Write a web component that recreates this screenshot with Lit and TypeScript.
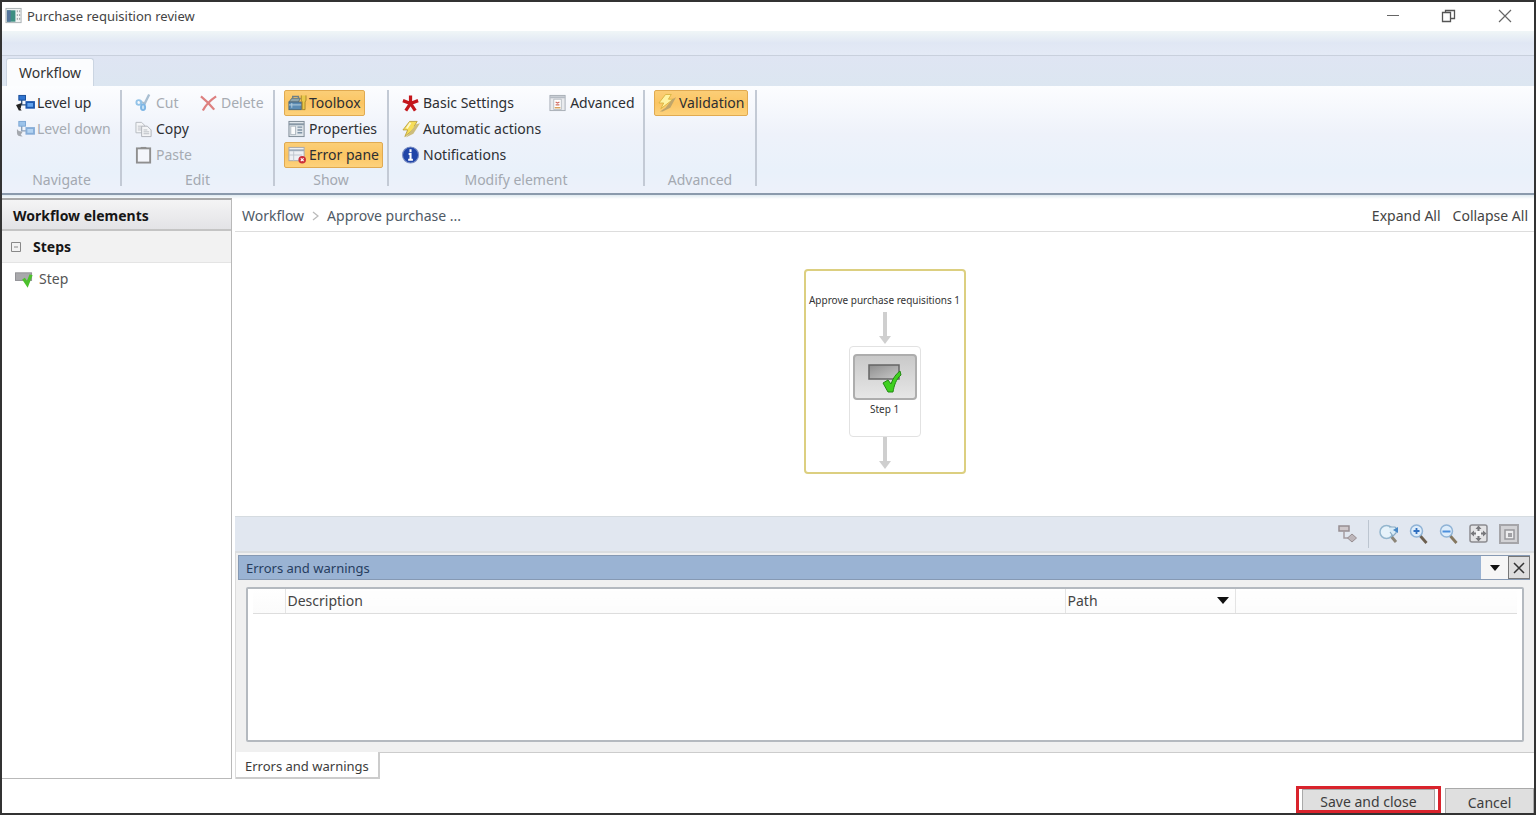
import { LitElement, html, css, svg, TemplateResult } from "lit";
import { customElement, state } from "lit/decorators.js";
import { classMap } from "lit/directives/class-map.js";

const shape = {
  app: svg`<rect x="1" y="1" width="16" height="15" fill="#f1f3f3" stroke="#a9b0b3"/><rect x="2" y="3" width="9" height="12" fill="#3e8f82"/><rect x="2" y="3" width="4" height="12" fill="#55759c"/><path d="M13 3v12M15.500 3v12" stroke="#8f9698" stroke-dasharray="2 2"/>`,
  levelUp: svg`<path d="M6 5v6h6" fill="none" stroke="#37577f" stroke-width="1.500"/><rect x="3" y="1" width="7" height="5" fill="#2f74d0" stroke="#174b97"/><rect x="11" y="8" width="8" height="6" fill="#62a3ee" stroke="#1c57ad" stroke-width="2"/><path d="M0 11l6-2-1 6-1.500-1.500L6 17H3l-2-4z" fill="#222"/>`,
  levelDown: svg`<path d="M6 5v6h6" fill="none" stroke="#8ba0b8" stroke-width="1.500"/><rect x="3" y="1" width="7" height="5" fill="#9cc3ea" stroke="#7ba5d3"/><rect x="11" y="8" width="8" height="6" fill="#b3d3f2" stroke="#86add8" stroke-width="2"/><path d="M1 9v4c0 3 2 4 6 4l-2-2 2-3-4-1z" fill="#a4a8ae"/>`,
  cut: svg`<path d="M15 0L9 12" stroke="#a9bfd2" stroke-width="2.500"/><path d="M5 7l6 3" stroke="#a9bfd2" stroke-width="2"/><circle cx="4" cy="8.500" r="2.500" fill="none" stroke="#93c3e8" stroke-width="2"/><ellipse cx="8.500" cy="13.500" rx="2.200" ry="3" fill="#c4e0f5" stroke="#7db5e4" stroke-width="2"/>`,
  remove: svg`<path d="M1 2c5 4 10 9 14 14M17 2C11 6 6 11 3 17" fill="none" stroke="#dd8080" stroke-width="2.400"/>`,
  copy: svg`<path d="M1 2h6l3 3v8H1z" fill="#f4f5f7" stroke="#b6bac0"/><path d="M3 6h4M3 8h5M3 10h5" stroke="#bcc0c6"/><path d="M7 6h6l4 4v7H7z" fill="#f4f5f7" stroke="#aeb2b8"/><path d="M9 10h4M9 12h6M9 14h6" stroke="#b8bcc2"/>`,
  paste: svg`<rect x="2" y="2" width="14" height="15" fill="#f4f6fb" stroke="#8f8f8f" stroke-width="2"/><path d="M6 1.500h6" stroke="#8f8f8f" stroke-width="2"/>`,
  toolbox: svg`<path d="M1 8l3-4h9l-2 4z" fill="#8fa5ad" stroke="#60747c"/><path d="M5 4V2h6v2" fill="none" stroke="#6f7f86" stroke-width="1.500"/><rect x="1" y="8" width="13" height="8" fill="#5c8cb4" stroke="#47667e"/><path d="M1 11h13M4 9v5" stroke="#b7cfdf"/><path d="M14 1v5l1 2v8h3V8l1-2V1" fill="#e9c94a" stroke="#98771f" stroke-width=".8"/>`,
  properties: svg`<rect x="1" y="1" width="16" height="16" fill="#dfe5ea" stroke="#7c8994"/><path d="M1 4h16" stroke="#8898a6" stroke-width="2"/><rect x="3" y="6" width="5" height="9" fill="#fafbfc" stroke="#a2adb6" stroke-width=".8"/><path d="M10 7h5M10 10h5M10 13h5" stroke="#7f93a5" stroke-width="1.500"/>`,
  errorPane: svg`<rect x="1" y="1" width="16" height="14" fill="#edf0f4" stroke="#a8a9ad"/><path d="M1 4h16" stroke="#9eabb9" stroke-width="2"/><path d="M6 5v10M1 9h14" stroke="#bec5ce"/><circle cx="15" cy="14" r="4" fill="#cc3038"/><path d="M13.500 12.500l3 3M16.500 12.500l-3 3" stroke="#fff" stroke-width="1.300"/>`,
  star: svg`<path d="M9 9.500V1M9 9.500l8-3M9 9.500l5 7.500M9 9.500l-5 7.500M9 9.500L1 6.500" stroke="#c4161c" stroke-width="3.400"/>`,
  bolt: svg`<path d="M8 1h8l-3 5h3L3 17l3-7H1z" fill="#f7de58" stroke="#b69c3b" stroke-width=".9"/><path d="M15 4l4-1-7 11-8 4z" fill="#cdbd7c"/><path d="M9 2.500L5 8.500" stroke="#fff8c8" stroke-width="2"/>`,
  boltPale: svg`<path d="M8 0h6l-3 5h5L3 15l3-6H1z" fill="#fff3a2" stroke="#d6b13c" stroke-width=".9"/><path d="M15 5l4-2-6 11-8 4H2l6-4z" fill="#c0a66a"/>`,
  info: svg`<circle cx="9" cy="9" r="8.500" fill="#2146a8" stroke="#7d90c4" stroke-width="1.200"/><path d="M9 3v3M7 8h2v6M6.500 14h5" stroke="#fff" stroke-width="2.200" fill="none"/>`,
  advanced: svg`<rect x="1" y="1" width="16" height="16" fill="#e9ebee" stroke="#a6adb5"/><path d="M1 3h16" stroke="#b5bcc4" stroke-width="2"/><path d="M5 5h8v11H5z" fill="#fff" stroke="#b6bcc3"/><path d="M7 8l2 1 2-1M7 11h4" stroke="#d06c62" stroke-width="1.300" fill="none"/><path d="M6 14h6" stroke="#daa25b" stroke-width="1.500"/>`,
  step: svg`<rect x="0.500" y="2.500" width="17" height="8" fill="#a9a9ac" stroke="#8f8f93"/><path d="M9 8.500l4 6 4-10" fill="none" stroke="#4cc12c" stroke-width="3.400"/>`,
  tree: svg`<rect x="1" y="2" width="10" height="5" fill="#cfc8cb" stroke="#978e92" stroke-width="1.500"/><path d="M6 7v7h5" fill="none" stroke="#a59da1" stroke-width="1.500"/><path d="M14 10l4.500 4-4.500 4-4.500-4z" fill="#bdb6ba" stroke="#978e92"/>`,
  zoomReset: svg`<path d="M11 11l6 7" stroke="#8c8577" stroke-width="3"/><circle cx="7.500" cy="8" r="6.500" fill="#e6f2fa" stroke="#94b6ce" stroke-width="1.500"/><path d="M10 3h6l2 2-1 4-3 3-3-4" fill="#d9ebf6" stroke="#8aabc4" stroke-width="1.200"/><path d="M14 6l5-3v6z" fill="#4888c6"/>`,
  zoomIn: svg`<path d="M10.500 11l7 8" stroke="#6c5f4f" stroke-width="2.800"/><circle cx="7.500" cy="7" r="6" fill="#ddecfa" stroke="#8fb3d6" stroke-width="1.500"/><path d="M7.500 4v6M4.500 7h6" stroke="#2f6fc0" stroke-width="1.800"/>`,
  zoomOut: svg`<path d="M10.500 11l7 8" stroke="#85775f" stroke-width="2.800"/><circle cx="7.500" cy="7" r="6" fill="#ddecfa" stroke="#8fb3d6" stroke-width="1.500"/><path d="M3.500 7.500h8" stroke="#4b8fdd" stroke-width="2"/>`,
  fit: svg`<rect x="1" y="1" width="17" height="17" rx="2" fill="#e3e3e5" stroke="#8c8c90" stroke-width="1.500"/><path d="M9.500 3v13M3 9.500h13" stroke="#77777b" stroke-width="2"/><path d="M9.500 1.500L6.500 5h6zM9.500 17.500l-3-3.500h6zM1.500 9.500L5 6.500v6zM17.500 9.500L14 6.500v6z" fill="#77777b"/><rect x="7" y="7" width="5" height="5" fill="#f3f3f4"/>`,
  actual: svg`<rect x="1" y="1" width="18" height="18" fill="#d2d2d5" stroke="#a5a5a9" stroke-width="2"/><rect x="6" y="6" width="9" height="9" fill="#ececee" stroke="#98989c" stroke-width="1.500"/><rect x="9" y="9" width="4" height="4" fill="#a1a1a5"/>`,
};

type IconName = keyof typeof shape;
interface Command { label: string; icon: IconName; on?: boolean; disabled?: boolean }
interface Group { name: string; key: string; columns: Command[][] }

const icon = (name: IconName, size = 18): TemplateResult =>
  html`<svg class="icon" width=${size} height=${size} viewBox=${size === 20 ? "0 0 20 20" : "0 0 19 18"} aria-hidden="true">${shape[name]}</svg>`;

const groups: Group[] = [
  { name: "Navigate", key: "navigate", columns: [[{ label: "Level up", icon: "levelUp" }, { label: "Level down", icon: "levelDown", disabled: true }]] },
  { name: "Edit", key: "edit", columns: [
    [{ label: "Cut", icon: "cut", disabled: true }, { label: "Copy", icon: "copy" }, { label: "Paste", icon: "paste", disabled: true }],
    [{ label: "Delete", icon: "remove", disabled: true }],
  ] },
  { name: "Show", key: "show", columns: [[{ label: "Toolbox", icon: "toolbox", on: true }, { label: "Properties", icon: "properties" }, { label: "Error pane", icon: "errorPane", on: true }]] },
  { name: "Modify element", key: "modify", columns: [
    [{ label: "Basic Settings", icon: "star" }, { label: "Automatic actions", icon: "bolt" }, { label: "Notifications", icon: "info" }],
    [{ label: "Advanced", icon: "advanced" }],
  ] },
  { name: "Advanced", key: "advanced", columns: [[{ label: "Validation", icon: "boltPale", on: true }]] },
];

const base = css`
  * { box-sizing: border-box; }
  button { font: inherit; color: inherit; background: none; border: 0; padding: 0; margin: 0; }
  .icon { flex: none; display: block; overflow: visible; }
`;

@customElement("ribbon-bar")
class RibbonBar extends LitElement {
  static styles = [base, css`
    :host { display: block; }
    .tabs { display: flex; align-items: flex-end; height: 31px; padding-left: 4px; border-top: 1px solid #c9d0dd; background: linear-gradient(#dfe5f3, #dce6f1); }
    .tab { height: 28px; padding: 0 12px; color: #333; background: #fbfcfe; border: 1px solid #cbd5e2; border-bottom: 0; border-radius: 3px 3px 0 0; }
    .groups { display: flex; height: 109px; padding: 4px 0 0 1px; background: linear-gradient(#fcfdff, #eef2fa 45%, #e9f1fa 80%, #edf1fa); border-bottom: 2px solid #8b9aac; }
    .group { display: flex; flex-direction: column; padding-left: 9px; border-right: 2px solid #c3cad5; margin-bottom: 7px; }
    .navigate { width: 119px; }
    .edit { width: 153px; }
    .show { width: 114px; }
    .modify { width: 256px; }
    .advanced { width: 112px; }
    .columns { display: flex; flex: none; height: 78px; }
    .column { display: flex; flex-direction: column; align-items: flex-start; }
    .command { display: flex; align-items: center; gap: 3px; height: 26px; padding: 0 3px; border: 1px solid transparent; border-radius: 2px; color: #2d2f33; white-space: nowrap; }
    .command:disabled { color: #a6abb2; }
    .on { background: linear-gradient(#fbce77, #fbc563 50%, #fdd27c); border-color: #e0aa51; }
    .caption { height: 12px; margin-top: 6px; line-height: 12px; padding-right: 9px; text-align: center; color: #a4a9b1; }
  `];

  render() {
    return html`
      <div class="tabs"><button class="tab">Workflow</button></div>
      <div class="groups">
        ${groups.map((g) => html`
          <div class="group ${g.key}">
            <div class="columns">
              ${g.columns.map((col) => html`<div class="column">
                ${col.map((c) => html`<button class=${classMap({ command: true, on: !!c.on })} ?disabled=${c.disabled}>${icon(c.icon)}<span>${c.label}</span></button>`)}
              </div>`)}
            </div>
            <div class="caption">${g.name}</div>
          </div>`)}
      </div>`;
  }
}

@customElement("workflow-canvas")
class WorkflowCanvas extends LitElement {
  static styles = [base, css`
    :host { display: flex; justify-content: center; padding-top: 37px; background: #fff; overflow: hidden; }
    .frame { display: flex; flex-direction: column; align-items: center; align-self: flex-start; width: 162px; height: 205px; padding-top: 19px; border: 2px solid #dccf80; border-radius: 4px; font-size: 10px; line-height: 20px; color: #333; white-space: nowrap; }
    .arrow { flex: none; display: block; }
    .node { width: 72px; height: 91px; margin: 2px 0 0; padding: 7px 3px; border: 1px solid #e2e2e2; border-radius: 4px; line-height: 18px; text-align: center; }
    .first { margin-top: 2px; }
    .face { display: grid; place-items: center; height: 46px; border: 2px solid #adadad; border-radius: 4px; background: linear-gradient(#c9c9c9, #e6e6e6); }
  `];

  private arrow(place = "") {
    return html`<svg class="arrow ${place}" width="14" height="32" viewBox="0 0 14 32" aria-hidden="true"><path d="M5 0h4v24h4l-6 8-6-8h4z" fill="#cfcfcf"/></svg>`;
  }

  render() {
    return html`<div class="frame">
      <div>Approve purchase requisitions 1</div>
      ${this.arrow("first")}
      <div class="node">
        <div class="face">
          <svg width="36" height="32" viewBox="0 0 36 32" aria-hidden="true">
            <defs><linearGradient id="g" x2="1" y2="1"><stop stop-color="#8e8e8e"/><stop offset="1" stop-color="#c8c8c8"/></linearGradient></defs>
            <rect x="2" y="4" width="30" height="14" fill="url(#g)" stroke="#666" stroke-width="1.500"/>
            <path d="M16 22l5-3 3 4c2-6 5-10 9-13l1 4c-5 4-7 11-8 17h-5z" fill="#3fd01f" stroke="#218a12"/>
          </svg>
        </div>
        <div>Step 1</div>
      </div>
      ${this.arrow()}
    </div>`;
  }
}

@customElement("error-pane")
class ErrorPane extends LitElement {
  static styles = [base, css`
    :host { display: block; padding: 2px 4px 0 2px; background: #f0f0f0; border-left: 1px solid #dcdcdc; }
    .head { display: flex; align-items: center; height: 25px; padding-left: 7px; background: #9ab3d3; border: 1px solid #8699b3; border-right: 0; color: #263d5f; }
    .title { flex: 1; font-size: 13px; }
    .drop, .close { display: grid; place-items: center; height: 23px; }
    .drop { width: 27px; background: #f6f6f6; }
    .close { width: 22px; background: #dedede; border: 1px solid #777; }
    .box { height: 155px; margin: 7px 6px 0 8px; padding: 0 5px; background: #fff; border: 2px solid #b4b9bf; border-radius: 2px; }
    .table { width: 100%; table-layout: fixed; border-collapse: collapse; color: #444; }
    .table th { height: 24px; padding: 0 2px; font-weight: 400; text-align: left; border-bottom: 1px solid #ddd; border-right: 1px solid #e4e4e4; background: linear-gradient(#fff, #fbfbfb); }
    .table th:last-child { border-right: 0; }
    .mark { width: 32px; }
    .path { width: 170px; }
    .rest { width: 282px; }
    .sort { display: flex; align-items: center; justify-content: space-between; width: 100%; padding-right: 4px; }
    .foot { margin: 10px -4px 0 -2px; border-top: 1px solid #ccc; background: #fff; }
    .tab { display: block; height: 27px; margin-top: -1px; padding: 2px 9px 0; background: #fff; border-right: 2px solid #ccc; border-bottom: 2px solid #ccc; color: #3c3c3c; font-size: 13px; }
  `];

  render() {
    return html`
      <div class="head">
        <span class="title">Errors and warnings</span>
        <button class="drop" aria-label="Pane menu"><svg width="10" height="6" viewBox="0 0 10 6"><path d="M0 0h10L5 6z" fill="#111"/></svg></button>
        <button class="close" aria-label="Close pane"><svg width="14" height="14" viewBox="0 0 14 14"><path d="M2 2l10 10M12 2L2 12" stroke="#333" stroke-width="1.500"/></svg></button>
      </div>
      <div class="box">
        <table class="table">
          <thead><tr>
            <th class="mark"></th><th>Description</th>
            <th class="path"><button class="sort">Path<svg width="12" height="7" viewBox="0 0 12 7"><path d="M0 0h12L6 7z" fill="#111"/></svg></button></th>
            <th class="rest"></th>
          </tr></thead>
        </table>
      </div>
      <div class="foot"><button class="tab">Errors and warnings</button></div>`;
  }
}

@customElement("app-root")
class AppRoot extends LitElement {
  static styles = [base, css`
    :host { display: block; font: 14px/20px "Noto Sans", "Open Sans", sans-serif; color: #333; }
    .window { display: flex; flex-direction: column; height: 100vh; overflow: hidden; border: 2px solid #333; background: #fff; }
    .title-bar { flex: none; display: flex; align-items: center; height: 29px; padding: 0 20px 2px 3px; gap: 4px; color: #444; }
    .name { flex: 1; font-size: 13px; }
    .controls { display: flex; gap: 38px; }
    .controls button { display: block; }
    .controls svg { display: block; }
    .strip { flex: none; height: 24px; background: linear-gradient(#f0f6f7, #e0e7f4 50%, #e4eaf6); }
    .ribbon { flex: none; }
    .body { flex: 1; min-height: 0; display: grid; grid-template-columns: 230px minmax(0, 1fr); column-gap: 3px; background: linear-gradient(#dfeaf0, #fff 4px); }
    .side { margin-top: 3px; border: 1px solid #b9b9b9; border-top: 2px solid #aaa; border-left: 0; background: #fff; }
    .side-head { height: 31px; padding: 0 11px; line-height: 32px; font-weight: 700; color: #161616; background: linear-gradient(#f4f4f5, #e3e3e6); border-bottom: 2px solid #c4c4c4; }
    .section { display: flex; align-items: center; gap: 11px; width: 100%; height: 32px; padding: 0 8px; font-weight: 700; color: #161616; background: #f2f2f2; border-bottom: 1px solid #e4e4e4; }
    .item { display: flex; align-items: center; gap: 6px; height: 32px; padding: 0 13px; color: #555; }
    .main { display: flex; flex-direction: column; min-width: 0; }
    .crumbs { flex: none; display: flex; align-items: center; height: 37px; padding: 5px 6px 0 7px; gap: 8px; border-bottom: 1px solid #ddd; color: #4f5a66; }
    .spacer { flex: 1; }
    .crumbs button { color: #444; }
    .links { display: flex; gap: 12px; }
    .canvas { flex: 1; min-height: 0; }
    .tools { flex: none; display: flex; align-items: center; justify-content: flex-end; gap: 10px; height: 37px; padding-right: 15px; background: #e1e7f0; border-top: 1px solid #d5dbe0; border-bottom: 2px solid #dadde0; }
    .rule { width: 1px; height: 28px; background: #bcc5d0; }
    .errors { flex: none; }
    .footer { flex: none; display: flex; justify-content: flex-end; gap: 4px; height: 34px; padding-top: 7px; }
    .mark { display: flex; height: 27px; padding: 0 3px; border: 3px solid #d9232c; }
    .push { background: #dfdfdf; border: 1px solid #a9a9a9; color: #3d3d3d; text-align: center; }
    .save { width: 133px; height: 21px; padding-top: 4px; line-height: 16px; border-bottom: 0; }
    .cancel { width: 89px; height: 25px; margin-top: 2px; padding-top: 4px; border-bottom: 0; }
  `];

  @state() private open = true;

  render() {
    return html`<div class="window">
      <header class="title-bar">
        ${icon("app")}<span class="name">Purchase requisition review</span>
        <div class="controls">
          <button aria-label="Minimize"><svg width="18" height="18" viewBox="0 0 18 18"><path d="M3 8.500h12" stroke="#666"/></svg></button>
          <button aria-label="Restore"><svg width="18" height="18" viewBox="0 0 18 18"><path d="M2.500 5.500h8v9h-8zM5.500 5V3.500h9v8H11" fill="none" stroke="#555" stroke-width="1.300"/></svg></button>
          <button aria-label="Close"><svg width="18" height="18" viewBox="0 0 18 18"><path d="M3 3l12 12M15 3L3 15" stroke="#666" stroke-width="1.200"/></svg></button>
        </div>
      </header>
      <div class="strip"></div>
      <ribbon-bar class="ribbon"></ribbon-bar>
      <div class="body">
        <aside class="side">
          <div class="side-head">Workflow elements</div>
          <button class="section" aria-expanded=${this.open} @click=${() => (this.open = !this.open)}>
            <svg width="12" height="12" viewBox="0 0 12 12"><path d="M1.500 1.500h9v9h-9zM4 6h4" fill="none" stroke="#888"/></svg>Steps
          </button>
          ${this.open ? html`<div class="item">${icon("step")}Step</div>` : ""}
        </aside>
        <main class="main">
          <nav class="crumbs">
            <span>Workflow</span>
            <svg width="7" height="10" viewBox="0 0 7 10"><path d="M1 1l5 4-5 4" fill="none" stroke="#bbb" stroke-width="1.300"/></svg>
            <span>Approve purchase ...</span>
            <span class="spacer"></span>
            <div class="links"><button>Expand All</button><button>Collapse All</button></div>
          </nav>
          <workflow-canvas class="canvas"></workflow-canvas>
          <div class="tools">
            <button aria-label="Auto arrange">${icon("tree", 20)}</button>
            <span class="rule"></span>
            <button aria-label="Reset zoom">${icon("zoomReset", 20)}</button>
            <button aria-label="Zoom in">${icon("zoomIn", 20)}</button>
            <button aria-label="Zoom out">${icon("zoomOut", 20)}</button>
            <button aria-label="Fit to window">${icon("fit", 20)}</button>
            <button aria-label="Actual size">${icon("actual", 20)}</button>
          </div>
          <error-pane class="errors"></error-pane>
        </main>
      </div>
      <footer class="footer">
        <div class="mark"><button class="push save">Save and close</button></div>
        <button class="push cancel">Cancel</button>
      </footer>
    </div>`;
  }
}
